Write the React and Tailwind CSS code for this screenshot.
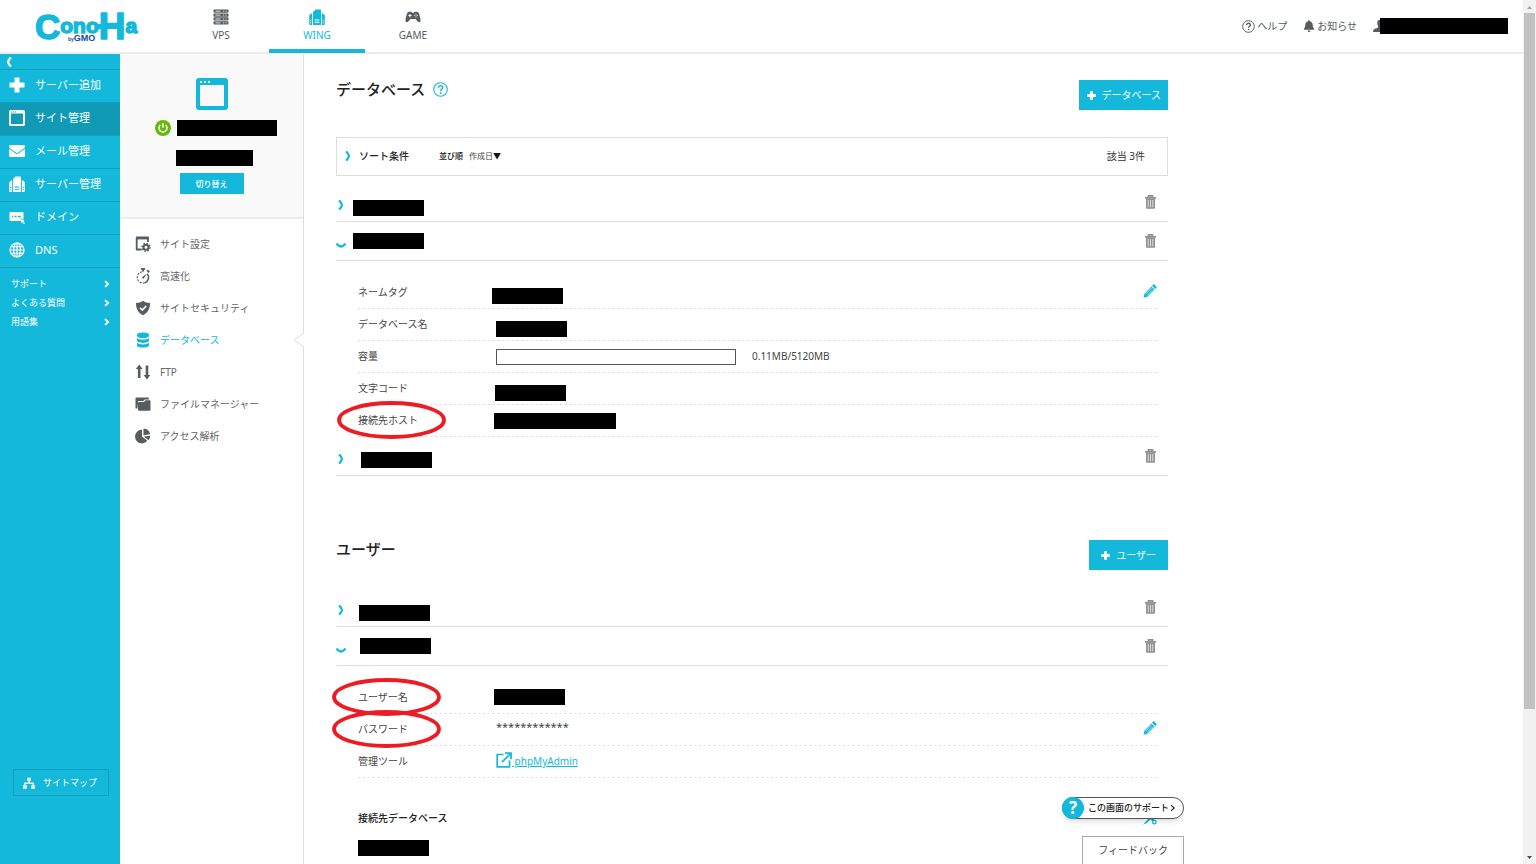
import React, { useState } from 'react';
import { FaBell, FaEnvelope } from 'react-icons/fa';

const Icon = ({ children, size = 'h-4 w-4', box = '0 0 16 16' }) => (
  <svg viewBox={box} className={`${size} shrink-0`} fill="none" stroke="none" aria-hidden="true">
    {children}
  </svg>
);

const PlusIcon = ({ size }) => (
  <Icon size={size}>
    <path d="M5.500 0.5h5v5h5v5h-5v5h-5v-5h-5v-5h5z" fill="currentColor" />
  </Icon>
);

const WindowIcon = ({ size }) => (
  <Icon size={size} box="0 0 32 32">
    <path
      d="M3 0h26a3 3 0 0 1 3 3v26a3 3 0 0 1-3 3H3a3 3 0 0 1-3-3V3a3 3 0 0 1 3-3zM4 7v21h24V7zM4 3v2h2V3zM8 3v2h2V3zM12 3v2h2V3z"
      fill="currentColor"
      fillRule="evenodd"
    />
  </Icon>
);

const WingIcon = ({ size }) => (
  <Icon size={size}>
    <path
      d="M6.600.5H11c.7 0 1 .4 1 1V15c0 .6-.3 1-1 1H5c-.6 0-1-.4-1-1V3.100zM5.600 10.400v1h4.800v-1zM5.600 12.800v1h4.800v-1z"
      fill="currentColor"
      fillRule="evenodd"
    />
    <path
      d="M3.100 4v12H1.400c-.8 0-1.200-.4-1.200-1.200V6.300zM12.900 4l2.900 2v8.800c0 .8-.4 1.200-1.200 1.200h-1.700zM1 11v1h1.200v-1zM1 13.200v1h1.200v-1zM13.800 11v1H15v-1zM13.800 13.200v1H15v-1z"
      fill="currentColor"
      fillRule="evenodd"
    />
  </Icon>
);

const ServerIcon = ({ size }) => (
  <Icon size={size}>
    {[0.5, 4.4, 8.3, 12.2].map((y) => (
      <g key={y}>
        <rect x="0.5" y={y} width="15" height="3.300" rx="0.8" fill="currentColor" />
        <path d={`M2.500 ${y + 1.7}h5M10 ${y + 1.7}h1.200M12.500 ${y + 1.7}h1.200`} stroke="#fff" strokeWidth="0.8" />
      </g>
    ))}
  </Icon>
);

const GamepadIcon = () => (
  <Icon>
    <path
      d="M4.300 2.800h2.200l.6.900h1.800l.6-.9h2.200c1 0 1.700.5 2.100 1.500.9 2.300 1.600 4.800 1.700 7 .1 2.200-1.600 2.600-2.800 1.300L10.600 10H5.400l-2.100 2.600C2.100 13.900.4 13.500.5 11.300c.1-2.200.8-4.700 1.700-7 .4-1 1.100-1.500 2.100-1.500z"
      fill="currentColor"
    />
    <path d="M5 5v3.200M3.400 6.600h3.200" stroke="#fff" strokeWidth="1" />
    <path d="M11 4.700v1M11 7.500v1M9.300 6.600h1M11.800 6.600h1" stroke="#fff" strokeWidth="1" />
  </Icon>
);

const DomainIcon = () => (
  <Icon>
    <path
      d="M1.500 3h12a1 1 0 0 1 1 1v6.500l-3-1.500.8 3H1.500a1 1 0 0 1-1-1V4a1 1 0 0 1 1-1z"
      fill="currentColor"
    />
    <path d="M3 7.500h1.200M5.500 7.500h2M8.800 7.500h3" stroke="#14b8da" strokeWidth="1.400" />
    <path d="M12 10l3.500 1.500-1.200.8 1.700 1.900-1 .9-1.700-1.800-.8 1.200z" fill="currentColor" />
  </Icon>
);

const GlobeIcon = () => (
  <Icon>
    <g stroke="currentColor" strokeWidth="1.200">
      <circle cx="8" cy="8" r="7" />
      <ellipse cx="8" cy="8" rx="3.400" ry="7" />
      <path d="M8 1v14M1 8h14M2 4.600h12M2 11.400h12" />
    </g>
  </Icon>
);

const SiteGearIcon = () => (
  <Icon>
    <path d="M6.500 13.500H1.700V1.500H13V6" stroke="currentColor" strokeWidth="1.800" strokeLinejoin="round" />
    <path d="M1.500 2.200H13" stroke="currentColor" strokeWidth="2.400" />
    <circle cx="11" cy="11.300" r="2.500" stroke="currentColor" strokeWidth="2" />
    <circle cx="11" cy="11.300" r="3.900" stroke="currentColor" strokeWidth="1.500" strokeDasharray="1.530 1.530" />
  </Icon>
);

const StopwatchIcon = () => (
  <Icon>
    <path d="M12.300 5.700a5.700 5.700 0 0 1-2.300 9" stroke="currentColor" strokeWidth="1.500" />
    <path d="M10 14.700A5.700 5.700 0 1 1 8 3.700" stroke="currentColor" strokeWidth="1.100" strokeDasharray="2.200 1.200" />
    <path d="M6 .8h4.200M8.100 1v2.500M12.200 2.300l2 1.900" stroke="currentColor" strokeWidth="1.900" />
    <path d="M12 5.500L8.900 10.300a1 1 0 0 1-1.500-1.400z" fill="currentColor" />
  </Icon>
);

const ShieldIcon = () => (
  <Icon>
    <path d="M8 .8c2 1.500 4.300 2.200 7 2.300.1 5.600-2 9.800-7 12.100C3 12.900.9 8.700 1 3.100 3.700 3 6 2.300 8 .8z" fill="currentColor" />
    <path d="M5 7.800l2.300 2.200 3.900-4" stroke="#fff" strokeWidth="1.600" />
  </Icon>
);

const DatabaseIcon = () => (
  <Icon>
    <path d="M2 2.800C2 1.300 4.700.5 8 .5s6 .8 6 2.300v1c0 1.500-2.700 2.300-6 2.300S2 5.300 2 3.800z" fill="currentColor" />
    <path d="M2 6c1.500 1.300 3.500 1.600 6 1.600s4.500-.3 6-1.600v2.600c0 1.500-2.700 2.300-6 2.300s-6-.8-6-2.300z" fill="currentColor" />
    <path d="M2 10.800c1.500 1.300 3.500 1.600 6 1.600s4.500-.3 6-1.600v2.400c0 1.500-2.700 2.300-6 2.300s-6-.8-6-2.300z" fill="currentColor" />
  </Icon>
);

const TransferIcon = () => (
  <Icon>
    <path d="M4.200 14V3M12 1.500V12" stroke="currentColor" strokeWidth="2.600" />
    <path d="M.8 5L4.200.5 7.600 5zM8.600 11h6.800L12 15.500z" fill="currentColor" />
  </Icon>
);

const FolderIcon = () => (
  <Icon>
    <path d="M.5 12.500V2.500a1 1 0 0 1 1-1h12.300v2H9.800L8.300 5H3.200L2.400 12.500z" fill="currentColor" />
    <path d="M3 7a1 1 0 0 1 1-1h5l1.500-1.700h4a1 1 0 0 1 1 1v8.500a1 1 0 0 1-1 1H4a1 1 0 0 1-1-1z" fill="currentColor" />
  </Icon>
);

const PieIcon = () => (
  <Icon>
    <path d="M7 1.800V8.500l5.200 4.300A6.800 6.800 0 1 1 7 1.800z" fill="currentColor" />
    <path d="M8.500.5a7 7 0 0 1 6.600 5.800l-6.600.9zM8.800 8.500l6.400-.8a7 7 0 0 1-1.600 4.500z" fill="currentColor" />
  </Icon>
);

const HelpIcon = ({ size }) => (
  <Icon size={size}>
    <circle cx="8" cy="8" r="7.200" stroke="currentColor" strokeWidth="1.200" />
    <path d="M5.700 6.200c.1-3.100 4.700-2.900 4.600-.1 0 1.600-2.200 1.700-2.200 3.500" stroke="currentColor" strokeWidth="1.700" />
    <circle cx="8.100" cy="11.700" r="1" fill="currentColor" />
  </Icon>
);

const TrashIcon = () => (
  <Icon size="h-[14px] w-[11px]" box="0 0 11 14">
    <path d="M0 2.800h11M3.500 2.500V.8h4v1.700" stroke="currentColor" strokeWidth="1.800" />
    <path d="M1 3.500h9V13a.7.7 0 0 1-.7.7H1.700A.7.7 0 0 1 1 13z" fill="currentColor" />
    <path d="M3.200 5v7.300M5.500 5v7.300M7.800 5v7.300" stroke="#fff" strokeWidth="0.700" />
  </Icon>
);

const PencilIcon = () => (
  <Icon size="h-[14px] w-[14px]">
    <path d="M11.700.6a1 1 0 0 1 1.300 0L15.400 3a1 1 0 0 1 0 1.300l-1.500 1.500-3.700-3.700z" fill="currentColor" />
    <path d="M9.600 2.800L13.200 6.400 5 14.500.6 15.600l1-4.500z" fill="currentColor" />
    <path d="M3.100 11.300l6.700-6.800M4.800 13l6.700-6.800" stroke="#fff" strokeWidth="0.700" />
  </Icon>
);

const ExternalIcon = () => (
  <Icon>
    <path d="M7.500 2.500H1.200v12.300h12.300V8.500" stroke="currentColor" strokeWidth="1.700" />
    <path d="M9 1.200h6v6M15 1.200L6 10.200" stroke="currentColor" strokeWidth="1.800" />
  </Icon>
);

const SitemapIcon = () => (
  <Icon size="h-3 w-3">
    <path d="M5.500 1h5v4h-5zM0 11h5v4.500H0zM11 11h5v4.500h-5z" fill="currentColor" />
    <path d="M8 5v3M2.500 11V8.200h11V11" stroke="currentColor" strokeWidth="1.600" />
  </Icon>
);

const PowerIcon = () => (
  <Icon>
    <circle cx="8" cy="8" r="8" fill="#68b70c" />
    <path d="M5.300 5a4 4 0 1 0 5.400 0M8 3.200v4.600" stroke="#fff" strokeWidth="1.500" />
  </Icon>
);

const Bracket = ({ open }) => (
  <Icon size="h-[10px] w-[10px]" box="0 0 10 10">
    {open ? (
      <path d="M.5 4.500Q1.800 6.600 5 7.600 8.200 6.600 9.500 4.500" stroke="currentColor" strokeWidth="2.200" />
    ) : (
      <path d="M3 .5Q5.200 2 6 5 5.200 8 3 9.500" stroke="currentColor" strokeWidth="2.200" />
    )}
  </Icon>
);

const Chevron = ({ size = 'h-2 w-2', width = 2.2 }) => (
  <Icon size={size} box="0 0 10 10">
    <path d="M2.500 1.500l4 3.500-4 3.500" stroke="currentColor" strokeWidth={width} />
  </Icon>
);

const Logo = () => (
  <svg viewBox="0 0 106 40" className="h-10 w-[106px]" role="img" aria-label="ConoHa by GMO">
    <text
      x="2"
      y="33"
      fill="#14b8da"
      stroke="#14b8da"
      strokeWidth="1.500"
      strokeLinejoin="round"
      fontFamily="Liberation Sans"
      fontWeight="bold"
    >
      <tspan fontSize="35">C</tspan>
      <tspan fontSize="21" y="27">ono</tspan>
      <tspan fontSize="37" y="33">H</tspan>
      <tspan fontSize="21" y="27">a</tspan>
    </text>
    <path d="M64 20.500h26" stroke="#14b8da" strokeWidth="5" />
    <text x="35" y="35" fill="#0d4ea2" fontFamily="Liberation Sans" fontWeight="bold">
      <tspan fontSize="5">by</tspan>
      <tspan fontSize="9">GMO</tspan>
    </text>
  </svg>
);

const services = [
  { name: 'VPS', icon: <ServerIcon /> },
  { name: 'WING', icon: <WingIcon />, active: true },
  { name: 'GAME', icon: <GamepadIcon /> },
];

const mainNav = [
  { name: 'サーバー追加', icon: <PlusIcon /> },
  { name: 'サイト管理', icon: <WindowIcon size="h-4 w-4" />, active: true },
  { name: 'メール管理', icon: <FaEnvelope className="h-4 w-4" /> },
  { name: 'サーバー管理', icon: <WingIcon /> },
  { name: 'ドメイン', icon: <DomainIcon /> },
  { name: 'DNS', icon: <GlobeIcon /> },
];

const siteNav = [
  { name: 'サイト設定', icon: <SiteGearIcon /> },
  { name: '高速化', icon: <StopwatchIcon /> },
  { name: 'サイトセキュリティ', icon: <ShieldIcon /> },
  { name: 'データベース', icon: <DatabaseIcon />, active: true },
  { name: 'FTP', icon: <TransferIcon /> },
  { name: 'ファイルマネージャー', icon: <FolderIcon /> },
  { name: 'アクセス解析', icon: <PieIcon /> },
];

const Masked = ({ className = 'w-[71px]' }) => <span className={`block h-4 shrink-0 bg-black ${className}`} />;

const Header = () => (
  <header className="flex h-[54px] shrink-0 items-stretch border-b-2 border-[#ececec]">
    <a href="#home" className="flex w-[173px] shrink-0 items-center pl-[33px]">
      <Logo />
    </a>
    <nav className="flex">
      {services.map((s) => (
        <a
          key={s.name}
          href={`#${s.name}`}
          className={`-mb-px flex w-24 flex-col items-center gap-1 border-b-4 pt-[9px] leading-3 ${
            s.active ? 'border-[#14b8da] text-[#14b8da]' : 'border-transparent text-[#555d60]'
          }`}
        >
          {s.icon}
          {s.name}
        </a>
      ))}
    </nav>
    <div className="ml-auto flex items-center gap-4 pr-[15px] text-[#555d60]">
      <a href="#help" className="flex items-center gap-[2px]">
        <HelpIcon size="h-[13px] w-[13px]" />
        ヘルプ
      </a>
      <a href="#news" className="flex items-center gap-[2px]">
        <FaBell className="h-3 w-3" />
        お知らせ
      </a>
      <a href="#account" className="flex items-center" aria-label="アカウント">
        <Icon size="h-3 w-[7px]" box="0 0 7 12">
          <path d="M7 0H5.500C4 1 3.800 3.800 5 6.200c.4 1-.2 1.600-1.500 2C1 9 0 9.700 0 12h7z" fill="currentColor" />
        </Icon>
        <Masked className="w-32" />
      </a>
    </div>
  </header>
);

const Sidebar = () => (
  <aside className="flex w-[120px] shrink-0 flex-col bg-[#14b8da] text-white">
    <button type="button" aria-label="メニューを閉じる" className="flex h-[15px] items-center pl-1">
      <span className="rotate-180">
        <Bracket />
      </span>
    </button>
    <nav className="border-b border-[#109fbd] text-[11px]">
      {mainNav.map((item) => (
        <a
          key={item.name}
          href={`#${item.name}`}
          className={`flex h-[33px] items-center gap-[10px] border-t border-[#109fbd] pr-2 pb-[2px] pl-[9px] ${
            item.active ? 'bg-[#109ab6]' : ''
          }`}
        >
          {item.icon}
          {item.name}
        </a>
      ))}
    </nav>
    <ul className="mt-[6px] pr-[9px] pl-[11px] text-[9px] leading-[19px]">
      {['サポート', 'よくある質問', '用語集'].map((name) => (
        <li key={name}>
          <a href={`#${name}`} className="flex items-center justify-between">
            {name}
            <Chevron />
          </a>
        </li>
      ))}
    </ul>
    <a
      href="#sitemap"
      className="mr-[11px] ml-[13px] mt-auto mb-[68px] flex h-[27px] items-center gap-2 border border-[#109fbd] pl-[9px] text-[9px]"
    >
      <SitemapIcon />
      サイトマップ
    </a>
  </aside>
);

const SitePanel = () => (
  <div className="w-[184px] shrink-0 border-r border-[#dedede]">
    <div className="flex h-[165px] flex-col items-center border-b-2 border-[#ececec] bg-[#f9f9f9] pt-6">
      <span className="text-[#14b8da]">
        <WindowIcon size="h-8 w-8" />
      </span>
      <div className="mt-[10px] flex w-full items-center gap-[6px] pl-[35px]">
        <PowerIcon />
        <Masked className="w-[100px]" />
      </div>
      <div className="mt-[14px] pl-[6px]">
        <Masked className="w-[77px]" />
      </div>
      <button type="button" className="mt-[7px] h-[21px] w-16 bg-[#14b8da] text-[8px] font-medium text-white">
        切り替え
      </button>
    </div>
    <nav className="pt-[9px] text-[#666]">
      {siteNav.map((item) => (
        <a
          key={item.name}
          href={`#${item.name}`}
          className={`relative flex h-8 items-center gap-[9px] pl-[15px] ${item.active ? 'text-[#14b8da]' : ''}`}
        >
          <span className={item.active ? '' : 'text-[#555d60]'}>{item.icon}</span>
          {item.name}
          {item.active && (
            <svg viewBox="0 0 11 14" className="absolute top-[9px] -right-px h-[14px] w-[11px]" fill="#fff">
              <path d="M11 0L1 7l10 7" stroke="#dedede" />
            </svg>
          )}
        </a>
      ))}
    </nav>
  </div>
);

const AccordionRow = ({ open = false, label, mask, children }) => {
  const [expanded, setExpanded] = useState(open);
  return (
    <section>
      <div className="flex h-[39px] items-center justify-between border-b border-[#dedede] pr-3">
        <button
          type="button"
          aria-label={label}
          aria-expanded={expanded}
          onClick={() => setExpanded(!expanded)}
          className="flex h-full items-center text-[#14b8da]"
        >
          <span className="pt-[6px]">
            <Bracket open={expanded} />
          </span>
          <Masked className={`w-[71px] ${mask}`} />
        </button>
        <button type="button" aria-label="削除" className="text-[#919191]">
          <TrashIcon />
        </button>
      </div>
      {expanded && children}
    </section>
  );
};

const Dashes = () => (
  <svg className="absolute bottom-0 left-0 h-px w-full" aria-hidden="true">
    <line x1="0" y1="0.500" x2="100%" y2="0.500" stroke="#dedede" strokeDasharray="2.400 2.400" />
  </svg>
);

const Field = ({ name, circle, edit, children }) => (
  <div className="relative flex h-8 items-center pb-px">
    <dt className="w-[134px] shrink-0">{name}</dt>
    <dd className="flex flex-1 items-center">{children}</dd>
    {edit && (
      <button type="button" aria-label={`${name}を編集`} className="mb-1 text-[#14b8da]">
        <PencilIcon />
      </button>
    )}
    <Dashes />
    {circle && (
      <svg viewBox="0 0 109 38" className={`pointer-events-none absolute -top-1 z-10 h-[38px] w-[109px] ${circle}`}>
        <ellipse cx="54.500" cy="19" rx="52.500" ry="17" fill="none" stroke="#ed1c24" strokeWidth="3.800" />
      </svg>
    )}
  </div>
);

const AddButton = ({ children, pad }) => (
  <button type="button" className={`flex h-[30px] items-center gap-[6px] bg-[#14b8da] text-white ${pad}`}>
    <PlusIcon size="h-[9px] w-[9px]" />
    {children}
  </button>
);

const Databases = () => (
  <section>
    <div className="flex items-start justify-between">
      <h1 className="flex items-center gap-2 text-[15px] leading-[18px] font-medium text-[#222]">
        データベース
        <a href="#db-help" aria-label="データベースのヘルプ" className="text-[#14b8da]">
          <HelpIcon size="h-[15px] w-[15px]" />
        </a>
      </h1>
      <AddButton pad="pr-[7px] pl-2">データベース</AddButton>
    </div>
    <div className="mt-[27px] flex h-[39px] items-center border border-[#dedede] pr-[22px] pb-px pl-[6px]">
      <button type="button" className="flex items-center gap-[6px] font-medium text-[#222]">
        <span className="text-[#14b8da]">
          <Bracket />
        </span>
        ソート条件
      </button>
      <span className="ml-[30px] text-[8px] font-medium text-[#222]">並び順</span>
      <button type="button" className="ml-[6px] flex items-center text-[8px]">
        作成日<span className="text-[#111]">▼</span>
      </button>
      <span className="ml-auto text-[#333]">該当 3件</span>
    </div>
    <div className="mt-[7px]">
      <AccordionRow label="データベース 1" mask="mt-3 ml-[7px]" />
      <AccordionRow label="データベース 2" mask="ml-[7px]" open>
        <dl className="pt-4 pr-[11px] pl-[22px]">
          <Field name="ネームタグ" edit>
            <Masked className="mt-[6px] w-[71px]" />
          </Field>
          <Field name="データベース名">
            <Masked className="mt-2 ml-1 w-[71px]" />
          </Field>
          <Field name="容量">
            <div
              role="meter"
              aria-label="容量"
              aria-valuemin={0}
              aria-valuemax={5120}
              aria-valuenow={0.11}
              className="mt-px ml-1 h-4 w-60 border border-[#555]"
            />
            <span className="ml-4">0.11MB/5120MB</span>
          </Field>
          <Field name="文字コード">
            <Masked className="mt-2 ml-[3px] w-[71px]" />
          </Field>
          <Field name="接続先ホスト" circle="-left-[21px]">
            <Masked className="mt-px ml-[2px] w-[122px]" />
          </Field>
        </dl>
      </AccordionRow>
      <AccordionRow label="データベース 3" mask="mt-2 ml-[15px]" />
    </div>
  </section>
);

const Users = () => (
  <section className="mt-16">
    <div className="flex items-start justify-between">
      <h2 className="text-[15px] leading-[18px] font-medium text-[#222]">ユーザー</h2>
      <AddButton pad="px-3">ユーザー</AddButton>
    </div>
    <div className="mt-[18px]">
      <AccordionRow label="ユーザー 1" mask="mt-3 ml-[13px]" />
      <AccordionRow label="ユーザー 2" mask="ml-[14px]" open>
        <div className="pt-4 pr-[11px] pl-[22px]">
          <dl>
            <Field name="ユーザー名" circle="-left-[26px]">
              <Masked className="mb-[2px] ml-[2px] w-[71px]" />
            </Field>
            <Field name="パスワード" circle="-left-[26px]" edit>
              <span className="mb-1 ml-1 text-[11px]">************</span>
            </Field>
            <Field name="管理ツール">
              <a href="#phpmyadmin" className="ml-1 flex items-center text-[#14b8da]">
                <span className="mb-1">
                  <ExternalIcon />
                </span>
                <span className="whitespace-pre underline"> phpMyAdmin</span>
              </a>
            </Field>
          </dl>
          <div className="mt-[30px] flex h-5 items-center justify-between">
            <h3 className="font-medium text-[#222]">接続先データベース</h3>
            <button type="button" aria-label="接続先データベースを編集" className="text-[#14b8da]">
              <Icon size="h-[14px] w-[14px]">
                <path d="M1.500 1.500l3-1 10 11-2 2.500z" fill="currentColor" />
                <path d="M14 1L2.500 12.500.5 15.500l3.500-1.500L15.500 3z" fill="currentColor" />
                <circle cx="13" cy="12.800" r="2" stroke="currentColor" strokeWidth="1.400" fill="#fff" />
              </Icon>
            </button>
          </div>
          <Masked className="mt-3 w-[71px]" />
        </div>
      </AccordionRow>
    </div>
  </section>
);

const FloatingHelp = () => (
  <div className="absolute right-0 bottom-0 z-20 flex flex-col items-end">
    <button
      type="button"
      className="flex h-[22px] items-center rounded-full border border-[#555] bg-white pr-[6px] text-[9px] font-medium text-[#222] shadow-md"
    >
      <span className="-ml-px flex h-[22px] w-[22px] items-center justify-center rounded-full bg-[#14b8da] text-[17px] font-bold text-white">
        ?
      </span>
      <span className="ml-1">この画面のサポート</span>
      <Chevron width={1.4} />
    </button>
    <button type="button" className="mt-[17px] h-7 border border-b-0 border-[#aaa] bg-white px-[15px]">
      フィードバック
    </button>
  </div>
);

const Scrollbar = () => (
  <div className="flex w-[13px] shrink-0 flex-col items-center bg-[#f1f1f1]" aria-hidden="true">
    <svg viewBox="0 0 13 13" className="h-[13px] w-[13px]">
      <path d="M4 9l2.500-3L9 9z" fill="#a3a3a3" />
    </svg>
    <div className="flex w-[11px] flex-1 flex-col">
      <div className="h-[83%] bg-[#c1c1c1]" />
    </div>
    <svg viewBox="0 0 13 13" className="h-[13px] w-[13px]">
      <path d="M4 5l2.500 3L9 5z" fill="#505050" />
    </svg>
  </div>
);

const App = () => (
  <div className="flex h-screen overflow-hidden bg-white font-['Noto_Sans','Noto_Sans_CJK_JP',sans-serif] text-[10px] text-[#444]">
    <div className="flex min-w-0 flex-1 flex-col">
      <Header />
      <div className="flex min-h-0 flex-1">
        <Sidebar />
        <SitePanel />
        <main className="min-w-0 flex-1">
          <div className="relative h-full max-w-[880px] overflow-hidden pr-4 pl-8">
            <div className="pt-[26px]">
              <Databases />
              <Users />
            </div>
            <FloatingHelp />
          </div>
        </main>
      </div>
    </div>
    <Scrollbar />
  </div>
);

export default App;
